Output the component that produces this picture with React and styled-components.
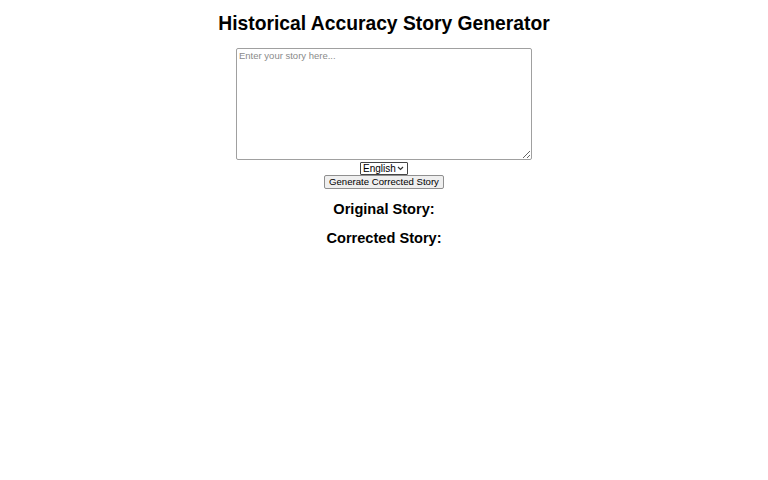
import styled, { createGlobalStyle } from "styled-components";

const GlobalStyle = createGlobalStyle`
    body {
        margin: 0;
        background: #fff;
        font-family: "Liberation Sans", Arial, sans-serif;
        color: #000;
    }
`;

const Page = styled.div`
    display: flex;
    flex-direction: column;
    align-items: center;
    padding-top: 13px;
`;

const Title = styled.h1`
    font-size: 19.3px;
    line-height: 22px;
    margin: 0 0 13px;
`;

const StoryInput = styled.textarea`
    box-sizing: border-box;
    width: 296px;
    height: 112px;
    padding: 1px 2px;
    font-family: "Liberation Sans", Arial, sans-serif;
    font-size: 9.5px;
    border: 1px solid #a0a0a0;
    border-radius: 2px;
    &::placeholder {
        color: #8a8a8a;
    }
`;

const Controls = styled.div`
    display: flex;
    flex-direction: column;
    align-items: center;
    margin-top: 2px;
`;

const chevron = `url("data:image/svg+xml,%3Csvg xmlns='http://www.w3.org/2000/svg' width='7' height='5' viewBox='0 0 7 5'%3E%3Cpath d='M1 1l2.5 2.5L6 1' fill='none' stroke='%23333' stroke-width='1.2'/%3E%3C/svg%3E")`;

const LanguageSelect = styled.select`
    appearance: none;
    box-sizing: border-box;
    width: 48px;
    height: 13px;
    padding: 0 10px 0 2px;
    font-family: "Liberation Sans", Arial, sans-serif;
    font-size: 10px;
    line-height: 11px;
    color: #000;
    background: #fff ${chevron} no-repeat right 3px center;
    border: 1px solid #444;
    border-radius: 1px;
`;

const Button = styled.button`
    box-sizing: border-box;
    height: 14px;
    padding: 0 4px;
    margin-top: 0;
    font-family: "Liberation Sans", Arial, sans-serif;
    font-size: 9.6px;
    line-height: 12px;
    color: #000;
    background: #efefef;
    border: 1px solid #8f8f8f;
    border-radius: 2px;
`;

const Heading = styled.h2`
    font-size: 14.6px;
    line-height: 17px;
    margin: 12px 0 0;
`;

const App = () => {
    return (
        <Page>
            <GlobalStyle />
            <Title>Historical Accuracy Story Generator</Title>
            <StoryInput placeholder="Enter your story here..." />
            <Controls>
                <LanguageSelect defaultValue="en">
                    <option value="en">English</option>
                    <option value="es">Spanish</option>
                    <option value="fr">French</option>
                </LanguageSelect>
                <Button>Generate Corrected Story</Button>
            </Controls>
            <Heading>Original Story:</Heading>
            <Heading>Corrected Story:</Heading>
        </Page>
    )
}

export default App;
